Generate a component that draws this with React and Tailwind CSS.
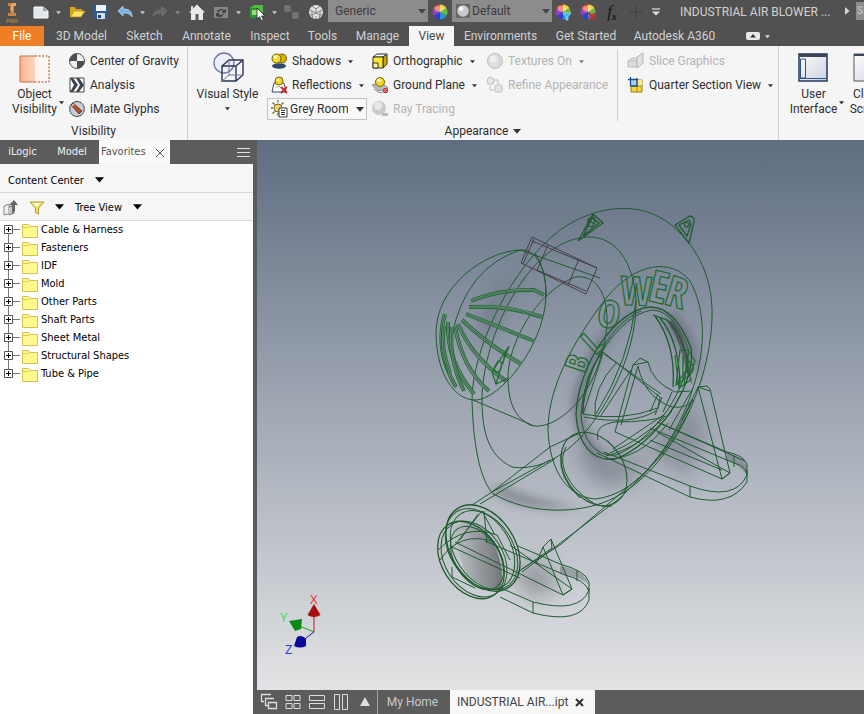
import { useState } from "react";

const RIBBON_TABS = [
  { name: "3D Model", className: "w-[71px]" },
  { name: "Sketch", className: "w-[55px]" },
  { name: "Annotate", className: "w-[69px]" },
  { name: "Inspect", className: "w-[58px]" },
  { name: "Tools", className: "w-[47px]" },
  { name: "Manage", className: "w-[63px]" },
  { name: "View", className: "w-[45px]" },
  { name: "Environments", className: "w-[93px]" },
  { name: "Get Started", className: "w-[78px]" },
  { name: "Autodesk A360", className: "w-[99px]" },
];

const FOLDERS = [
  "Cable & Harness",
  "Fasteners",
  "IDF",
  "Mold",
  "Other Parts",
  "Shaft Parts",
  "Sheet Metal",
  "Structural Shapes",
  "Tube & Pipe",
];

function Caret({ className = "text-[#333]", size = 5 }) {
  return (
    <svg width={size} height={size} viewBox="0 0 6 6" className={`shrink-0 ${className}`} aria-hidden="true">
      <path d="M0 1.5h6L3 5z" fill="currentColor" />
    </svg>
  );
}

function Icon({ size = 18, box = 18, children }) {
  return (
    <svg width={size} height={size} viewBox={`0 0 ${box} ${box}`} className="shrink-0" fill="none" aria-hidden="true">
      {children}
    </svg>
  );
}

/* ---------- quick access bar ---------- */

function QuickButton({ label, className = "", children }) {
  return (
    <button type="button" aria-label={label} className={`flex h-6 w-[22px] shrink-0 items-center justify-center ${className}`}>
      {children}
    </button>
  );
}

function QuickCaret({ label, dim }) {
  return (
    <button type="button" aria-label={label} className="flex h-6 w-[13px] shrink-0 items-center justify-center">
      <Caret className={dim ? "text-[#8a8a8a]" : "text-[#c8c8c8]"} />
    </button>
  );
}

function Wheel({ mark }) {
  return (
    <Icon>
      <path d="M9 9V1.500a7.500 7.500 0 0 1 6.500 3.750z" fill="#f6cf33" />
      <path d="M9 9l6.500-3.750a7.500 7.500 0 0 1 0 7.500z" fill="#63bd45" />
      <path d="M9 9l6.500 3.750A7.500 7.500 0 0 1 9 16.500z" fill="#2a8fd8" />
      <path d="M9 9v7.500a7.500 7.500 0 0 1-6.500-3.750z" fill="#3340c4" />
      <path d="M9 9l-6.500 3.750a7.500 7.500 0 0 1 0-7.500z" fill="#9a3cc0" />
      <path d="M9 9L2.500 5.250A7.500 7.500 0 0 1 9 1.500z" fill="#ec5330" />
      <ellipse cx="8" cy="6" rx="4.500" ry="3" fill="#fff" opacity=".35" />
      {mark === "filter" && <path d="M9 10h8l-3 3.500V17h-2v-3.500z" fill="#39b6e8" stroke="#e8f6fc" strokeWidth=".5" />}
      {mark === "clear" && <path d="M10 10l6 6.500M16 10l-6 6.500" stroke="#d42a2a" strokeWidth="2" />}
    </Icon>
  );
}

function QuickSelect({ label, value, icon }) {
  return (
    <div className="relative mb-1 flex h-[22px] w-[100px] shrink-0 items-center bg-[#8c8c8c] pl-1 text-[#3c3c3c]">
      {icon}
      <select
        aria-label={label}
        defaultValue={value}
        className={`h-full w-full appearance-none bg-transparent text-[12px] outline-none ${icon ? "pl-[2px]" : "pl-[3px]"}`}
      >
        <option>{value}</option>
      </select>
      <span className="pointer-events-none absolute right-[2px]">
        <Caret size={8} className="text-[#444]" />
      </span>
    </div>
  );
}

function QuickAccessBar() {
  return (
    <header className="flex h-[26px] items-start overflow-hidden bg-[#515151]">
      <div className="flex h-[26px] w-6 shrink-0 flex-col items-center">
        <svg width="12" height="15" viewBox="0 0 12 15" className="mt-[2px] shrink-0" aria-hidden="true">
          <path d="M2 1h8v3H7.500v7H10v3H2v-3h2.500V4H2z" fill="#c98443" />
          <path d="M4.500 4L7 1h3v3H7.500v7L4.500 8z" fill="#e8a860" />
        </svg>
        <span className="text-[6px] leading-[7px] font-bold text-[#c07a3a]">PRO</span>
      </div>
      <QuickButton label="New" className="ml-[6px]">
        <Icon>
          <path d="M2 4h9l5 4v7H2z" fill="#e3e7ec" stroke="#fff" />
          <path d="M11 4v4h5z" fill="#9aa1aa" />
        </Icon>
      </QuickButton>
      <QuickCaret label="New options" />
      <QuickButton label="Open" className="ml-px">
        <Icon>
          <path d="M2 4h5l1 2h6v3H6l-3 5H2z" fill="#d9a520" />
          <path d="M6 8h11l-4 6H2.500z" fill="#ffe169" stroke="#b88612" strokeWidth=".7" />
        </Icon>
      </QuickButton>
      <QuickButton label="Save" className="ml-[2px]">
        <Icon>
          <path d="M2 2h14v14H2z" fill="#305a94" />
          <path d="M4 2h10v6H4z" fill="#eef3f8" />
          <path d="M5 10h8v6H5z" fill="#d5dde7" />
          <path d="M6 12h3v3H6z" fill="#223f68" />
        </Icon>
      </QuickButton>
      <QuickButton label="Undo" className="ml-[2px]">
        <Icon>
          <path d="M2 8l5-5v3c5 0 9 1 9 8-2-3-4-4-9-4v3z" fill="#78b2e6" stroke="#c6e1f8" strokeWidth=".7" />
        </Icon>
      </QuickButton>
      <QuickCaret label="Undo list" />
      <QuickButton label="Redo">
        <Icon>
          <path d="M16 8l-5-4v3C6 7 3 8 2 13c2-2 4-3 9-3v3z" stroke="#747474" fill="#666" />
        </Icon>
      </QuickButton>
      <QuickCaret label="Redo list" dim />
      <QuickButton label="Home" className="ml-[2px]">
        <Icon>
          <path d="M9 1.500l8 8h-2V17H3V9.500H1z" fill="#e8eaec" />
          <path d="M7.500 11h3v6h-3z" fill="#565d66" />
          <path d="M3 3h2v4H3z" fill="#dadada" />
        </Icon>
      </QuickButton>
      <QuickButton label="Update" className="ml-[2px]">
        <Icon>
          <path d="M2 4h14v11H2z" fill="#858585" />
          <path d="M5 9a4 3 0 0 1 7-2l2-1v4h-4l1-2a2.500 2.500 0 0 0-4 1zM4 10h4l-1 1.500c2 1 4 0 5-1.500-1 5-5 5-7 3l-1 1z" fill="#444" />
        </Icon>
      </QuickButton>
      <QuickCaret label="Update options" />
      <QuickButton label="Select" className="ml-px">
        <Icon>
          <path d="M2 5l4-3h9v9l-4 4H2z" fill="#57b947" />
          <path d="M2 5h9v10H2z" fill="#2e9635" />
          <path d="M4 7h5v5H4z" fill="#9edb7f" />
          <path d="M9 5v11l2.500-2.300 2 4 2-1-2-3.700H17z" fill="#fff" stroke="#222" strokeWidth=".8" />
        </Icon>
      </QuickButton>
      <QuickCaret label="Select options" />
      <QuickButton label="Design doctor">
        <Icon>
          <path d="M2 3h5v5H2zM10 10h5v5h-5z" fill="#6f6f6f" stroke="#828282" />
          <path d="M8 7l2 2" stroke="#777" />
        </Icon>
      </QuickButton>
      <QuickButton label="Material" className="ml-[2px]">
        <Icon>
          <circle cx="9" cy="9" r="7" fill="#e2e2e2" />
          <path
            d="M5 3l4 3 4-3M9 6v4M5 8l4 2 4-2M3 7l2 1v4l-3 0M15 7l-2 1v4l3 0M5 12l4-2 4 2M9 16v-3M5 12l1 3M13 12l-1 3"
            stroke="#858585"
          />
        </Icon>
      </QuickButton>
      <div className="ml-px" />
      <QuickSelect label="Material" value="Generic" />
      <QuickButton label="Appearance" className="ml-px">
        <Wheel />
      </QuickButton>
      <div className="ml-px" />
      <QuickSelect
        label="Appearance"
        value="Default"
        icon={
          <Icon size={14}>
            <path d="M0 0h18v18H0z" fill="#666" />
            <circle cx="9" cy="9" r="7.500" fill="#c9c9c9" />
            <circle cx="6.500" cy="6" r="3" fill="#f4f4f4" />
          </Icon>
        }
      />
      <QuickButton label="Adjust appearance">
        <Wheel mark="filter" />
      </QuickButton>
      <QuickButton label="Clear appearance" className="ml-[3px]">
        <Wheel mark="clear" />
      </QuickButton>
      <QuickButton label="Parameters" className="ml-[2px]">
        <span className="font-['Liberation_Serif',serif] text-[17px] leading-5 text-[#151515] italic">
          f<sub className="text-[10px] font-bold">x</sub>
        </span>
      </QuickButton>
      <QuickButton label="Add" className="ml-[2px]">
        <Icon>
          <path d="M9 3v12M3 9h12" stroke="#444" strokeWidth="1.500" />
        </Icon>
      </QuickButton>
      <QuickButton label="Customize" className="-ml-[2px]">
        <Icon size={10} box={10}>
          <path d="M1 2h8" stroke="#ddd" strokeWidth="1.200" />
          <path d="M1 4.500h8L5 8.500z" fill="#ddd" />
        </Icon>
      </QuickButton>
      <h1 className="ml-[13px] shrink-0 text-[12px] leading-6 whitespace-nowrap text-[#d2d2d2]">INDUSTRIAL AIR BLOWER ...</h1>
      <div className="ml-auto flex h-[22px] shrink-0 items-center gap-[6px]">
        <svg width="5" height="8" viewBox="0 0 5 8" aria-hidden="true">
          <path d="M0 0l4.500 4L0 8z" fill="#d8d8d8" />
        </svg>
        <div className="h-[18px] w-2 bg-[#8c8c8c] pl-px text-[10px] leading-[18px] text-[#ccc]">S</div>
      </div>
    </header>
  );
}

function RibbonTabs({ active, onSelect }) {
  return (
    <nav className="flex h-5 overflow-hidden bg-[#515151] text-[12px] leading-5 text-[#d0d0d0]">
      <button type="button" className="mr-[2px] h-5 w-11 shrink-0 bg-[#ee7f25] text-white">
        File
      </button>
      {RIBBON_TABS.map((tab) => (
        <button
          key={tab.name}
          type="button"
          onClick={() => onSelect(tab.name)}
          className={`h-5 shrink-0 text-center whitespace-nowrap ${tab.className} ${active === tab.name ? "bg-[#f5f5f5] text-[#454545]" : ""}`}
        >
          {tab.name}
        </button>
      ))}
      <button type="button" aria-label="Minimize ribbon" className="ml-[22px] flex shrink-0 items-center gap-[5px]">
        <svg width="14" height="8" viewBox="0 0 14 8" aria-hidden="true">
          <rect width="14" height="8" rx="2" fill="#e8e8e8" />
          <path d="M4 5.500h6L7 2z" fill="#333" />
        </svg>
        <Caret className="text-[#ddd]" />
      </button>
    </nav>
  );
}

/* ---------- ribbon ---------- */

function RibbonButton({ icon, label, caret, disabled }) {
  return (
    <button
      type="button"
      disabled={disabled}
      className={`flex h-6 items-center gap-1 whitespace-nowrap ${disabled ? "text-[#b4b4b4]" : "text-[#2e2e2e]"}`}
    >
      {icon}
      <span>{label}</span>
      {caret && <Caret className={disabled ? "ml-[3px] text-[#777]" : "ml-[3px] text-[#333]"} />}
    </button>
  );
}

const shadowsIcon = (
  <Icon>
    <ellipse cx="9" cy="14" rx="7" ry="2.800" fill="#33486e" />
    <circle cx="12" cy="6.500" r="4.500" fill="#d9b400" stroke="#6b5900" />
    <circle cx="6.500" cy="6.500" r="4.500" fill="#f7dc20" stroke="#6b5900" />
    <circle cx="5.500" cy="5" r="1.800" fill="#fffbd0" />
  </Icon>
);

const reflectionsIcon = (
  <Icon>
    <path d="M4 7h10l2 9H2z" fill="#fff" stroke="#39475f" />
    <circle cx="9" cy="5" r="4" fill="#f2d524" stroke="#7a6600" />
    <circle cx="8" cy="3.800" r="1.500" fill="#fffbd0" />
    <path d="M6 12c1-2 4-2 5 0" stroke="#a89434" />
    <path d="M11 11l6 6M17 11l-6 6" stroke="#c6252a" strokeWidth="1.800" />
  </Icon>
);

const sunIcon = (
  <Icon>
    <circle cx="8" cy="8" r="4" fill="#f2d76a" stroke="#6c6130" />
    <path d="M8 0v2.500M1 8h2M2.500 2.500l2 2M13.500 2.500l-2 2M2.500 13.500l2-2M8 13v2.500" stroke="#7a6a20" strokeWidth="1.300" />
    <path d="M9 8h8v9H9z" fill="#fff" stroke="#3b3b3b" />
    <path d="M11 10.500h4M11 12.500h4M11 14.500h4" stroke="#3b3b3b" />
  </Icon>
);

const orthoIcon = (
  <Icon>
    <path d="M2 5l4-3h10l-4 3z" fill="#fff" stroke="#333" />
    <path d="M12 5l4-3v10l-4 4z" fill="#caa90a" stroke="#333" />
    <path d="M2 5h10v11H2z" fill="#ffe52e" stroke="#333" />
    <path d="M2 11h5v5H2z" fill="#fff6a0" stroke="#333" />
  </Icon>
);

const groundIcon = (
  <Icon>
    <path d="M1 9l7 6 9-3-6-5z" fill="#b9bec6" stroke="#888" />
    <path d="M3 13l6 4 5-2" stroke="#8a8f98" />
    <circle cx="9" cy="6" r="4.500" fill="#f2d524" stroke="#7a6600" />
    <circle cx="8" cy="4.500" r="1.800" fill="#fffbd0" />
    <path d="M12 12h5v5h-5z" fill="#c6353a" />
    <path d="M12 12l5 5M17 12l-5 5" stroke="#f2b0b0" strokeWidth=".7" />
  </Icon>
);

const rayIcon = (
  <Icon>
    <circle cx="8" cy="8" r="7" fill="#c9c9c9" />
    <circle cx="7" cy="6" r="4" fill="#e7e7e7" />
    <path d="M11 13h6v3h-6z" fill="#bcbcbc" />
  </Icon>
);

const texturesIcon = (
  <Icon>
    <circle cx="9" cy="9" r="7.500" fill="#e0e0e0" stroke="#bdbdbd" />
    <path d="M12 3q4 6 0 12" stroke="#cacaca" />
    <circle cx="7" cy="7" r="3.500" fill="#efefef" />
  </Icon>
);

const refineIcon = (
  <Icon>
    <circle cx="4.500" cy="5" r="3.500" stroke="#bdbdbd" fill="#e6e6e6" />
    <path d="M9 4h3v4M4 10v4h4" stroke="#bdbdbd" />
    <rect x="9" y="9" width="7" height="7" rx="1.500" stroke="#bdbdbd" fill="#e6e6e6" />
  </Icon>
);

const sliceIcon = (
  <Icon>
    <path d="M1 9h9v6H1zM1 9l4-3h6l-1 3" fill="#dcdcdc" stroke="#bcbcbc" />
    <path d="M10 5l6-4v10l-6 5z" fill="#e2e2e2" stroke="#b4b4b4" />
  </Icon>
);

const quarterIcon = (
  <Icon>
    <path d="M4 4h11v12H4z" fill="#f5d93a" stroke="#9b7d10" />
    <path d="M4 4h6v6H4z" fill="#a9d1f5" />
    <path d="M10 4h5v6h-5z" fill="#fbeb8a" />
    <path d="M4 10h11M10 4v12" stroke="#a5861a" />
    <path d="M1 3.500h10M3.500 1v9M3.500 10h7M10 2v8" stroke="#1d4f91" strokeWidth="1.300" />
  </Icon>
);

const gravityIcon = (
  <Icon>
    <circle cx="9" cy="9" r="7.500" fill="#eee" stroke="#555" />
    <path d="M9 9V1.500A7.500 7.500 0 0 0 1.500 9zM9 9v7.500A7.500 7.500 0 0 0 16.500 9z" fill="#4b4e54" />
  </Icon>
);

const analysisIcon = (
  <Icon>
    <path d="M2 2h14v14H2z" fill="#fff" stroke="#444" />
    <path d="M2 2h3l5 7-5 7H2l4-7zM8 2h3l5 7-5 7H8l4-7z" fill="#3f454d" />
  </Icon>
);

const imateIcon = (
  <Icon>
    <circle cx="9" cy="9" r="7.500" fill="#c9cfd8" stroke="#4a4a4a" />
    <path d="M3 13a8 8 0 0 1 0-8M15 13a8 8 0 0 0 0-8" stroke="#8b94a3" strokeWidth="1.500" />
    <path d="M5 3l9 8-3 3-8-9z" fill="#b5512f" stroke="#5b2414" strokeWidth=".8" />
    <path d="M4 6l2-2" stroke="#f1c4a9" strokeWidth="1.500" />
  </Icon>
);

function Ribbon() {
  return (
    <section className="flex h-[94px] overflow-hidden bg-[#f5f5f5] text-[12px] text-[#2e2e2e]">
      <div className="flex w-[187px] shrink-0 flex-col pt-[3px]">
        <div className="flex">
          <button type="button" className="flex w-[68px] flex-col items-center pt-[6px]">
            <svg width="31" height="28" viewBox="0 0 31 28" aria-hidden="true">
              <defs>
                <linearGradient id="visFill" x1="0" x2="1">
                  <stop offset="0" stopColor="#fbb58d" />
                  <stop offset="1" stopColor="#fdd5bd" />
                </linearGradient>
              </defs>
              <path d="M1 1h15v26H1z" fill="url(#visFill)" />
              <path d="M16 1h14v26H16z" fill="#fdf6f3" />
              <path d="M16 1H1v26h15" fill="none" stroke="#c4704c" />
              <path d="M16 1h14v26H16" fill="none" stroke="#a8452f" strokeDasharray="2 1.500" />
            </svg>
            <span className="mt-1 ml-2 flex items-center leading-[15px]">
              <span className="text-center">
                Object
                <br />
                Visibility
              </span>
              <Caret className="ml-[2px]" />
            </span>
          </button>
          <div className="flex flex-col items-start">
            <RibbonButton icon={gravityIcon} label="Center of Gravity" />
            <RibbonButton icon={analysisIcon} label="Analysis" />
            <RibbonButton icon={imateIcon} label="iMate Glyphs" />
          </div>
        </div>
        <h2 className="text-center leading-5">Visibility</h2>
      </div>

      <div className="flex w-[592px] shrink-0 flex-col border-x border-[#cdcdcd] pt-[3px]">
        <div className="flex h-[72px]">
          <button type="button" className="flex w-[79px] flex-col items-center pt-[3px]">
            <svg width="32" height="32" viewBox="0 0 32 32" fill="none" aria-hidden="true">
              <circle cx="12" cy="11" r="10" stroke="#6b74ae" strokeWidth="1.300" fill="#eceefa" />
              <path d="M10 14h14v15H10zM10 14l7-6h14v15l-7 6M24 14l7-6" stroke="#2b3654" strokeWidth="1.400" />
              <path d="M17 8v15h14M17 23l-7 6" stroke="#6d7898" />
            </svg>
            <span className="mt-[3px] leading-[15px] whitespace-nowrap">Visual Style</span>
            <Caret className="mt-1" />
          </button>
          <div className="flex w-[104px] flex-col items-start">
            <div className="flex flex-col items-start pl-[3px]">
              <RibbonButton icon={shadowsIcon} label="Shadows" caret />
              <RibbonButton icon={reflectionsIcon} label="Reflections" caret />
            </div>
            <div className="relative mt-px flex h-[22px] w-[100px] items-center border border-[#c2c2c2] bg-[#f8f8f8] pl-[2px]">
              {sunIcon}
              <select
                aria-label="Lighting style"
                defaultValue="Grey Room"
                className="h-full w-[60px] appearance-none overflow-hidden bg-transparent pl-[2px] text-[12px] outline-none"
              >
                <option>Grey Room</option>
              </select>
              <span className="pointer-events-none absolute right-[2px]">
                <Caret size={8} />
              </span>
            </div>
          </div>
          <div className="flex w-[115px] flex-col items-start">
            <RibbonButton icon={orthoIcon} label="Orthographic" caret />
            <RibbonButton icon={groundIcon} label="Ground Plane" caret />
            <RibbonButton icon={rayIcon} label="Ray Tracing" disabled />
          </div>
          <div className="flex w-[132px] flex-col items-start border-r border-[#cdcdcd]">
            <RibbonButton icon={texturesIcon} label="Textures On" caret disabled />
            <RibbonButton icon={refineIcon} label="Refine Appearance" disabled />
          </div>
          <div className="flex flex-col items-start pl-[9px]">
            <RibbonButton icon={sliceIcon} label="Slice Graphics" disabled />
            <RibbonButton icon={quarterIcon} label="Quarter Section View" caret />
          </div>
        </div>
        <h2 className="flex items-center justify-center gap-[5px] leading-5">
          Appearance <Caret size={8} />
        </h2>
      </div>

      <div className="flex shrink-0 pt-[3px] pl-[6px]">
        <button type="button" className="flex w-[56px] flex-col items-center pt-[4px]">
          <svg width="30" height="29" viewBox="0 0 30 29" aria-hidden="true">
            <defs>
              <linearGradient id="winFill" x1="0" y1="0" x2="1" y2="1">
                <stop offset="0" stopColor="#ffffff" />
                <stop offset="1" stopColor="#ccd1e0" />
              </linearGradient>
            </defs>
            <path d="M1 1h28v27H1z" fill="url(#winFill)" stroke="#24375c" strokeWidth="1.500" />
            <path d="M1 1h28v3H1z" fill="#3c4557" />
            <path d="M2.500 6h5v19h-5zM2 25.500h26" fill="none" stroke="#2c5590" />
          </svg>
          <span className="mt-[5px] ml-2 flex items-center leading-[15px]">
            <span className="text-center">
              User
              <br />
              Interface
            </span>
            <Caret className="ml-[2px]" />
          </span>
        </button>
        <button type="button" className="ml-[7px] flex w-[40px] flex-col items-center pt-[4px]">
          <svg width="30" height="29" viewBox="0 0 30 29" aria-hidden="true">
            <path d="M1 1h28v27H1z" fill="url(#winFill)" stroke="#555" />
            <path d="M1 1h28v2H1z" fill="#3c4557" />
          </svg>
          <span className="mt-[5px] text-center leading-[15px]">
            Clean
            <br />
            Screen
          </span>
        </button>
      </div>
    </section>
  );
}

/* ---------- content browser ---------- */

function BrowserPanel() {
  return (
    <aside className="flex w-[257px] shrink-0 flex-col border-r-4 border-[#595b5e] bg-white font-['DejaVu_Sans_Condensed','Noto_Sans',sans-serif] text-[11px] text-black">
      <div className="flex h-6 items-stretch bg-[#5c5c5c] text-[#f0f0f0]">
        <button type="button" className="w-[45px]">iLogic</button>
        <button type="button" className="w-[54px]">Model</button>
        <div className="flex w-[71px] items-center justify-between bg-[#fafafa] pr-[5px] pl-[2px] text-[#555]">
          <button type="button">Favorites</button>
          <button type="button" aria-label="Close Favorites" className="pt-[2px]">
            <Icon size={10} box={10}>
              <path d="M1 1l8 8M9 1l-8 8" stroke="#555" />
            </Icon>
          </button>
        </div>
        <button type="button" aria-label="Panel menu" className="mr-[3px] ml-auto">
          <Icon size={13} box={13}>
            <path d="M0 2.500h13M0 6.500h13M0 10.500h13" stroke="#e0e0e0" />
          </Icon>
        </button>
      </div>
      <button type="button" className="flex h-[29px] items-center gap-[11px] border-b border-[#d8d8d8] bg-[#f6f6f6] pt-[6px] pl-2">
        Content Center <Caret size={9} className="mb-1 text-black" />
      </button>
      <div className="flex h-[28px] items-center border-b border-[#d8d8d8] bg-[#f6f6f6] pt-[2px] pl-[2px]">
        <button type="button" aria-label="Up one level">
          <Icon>
            <path d="M2 7l5-2v10l-5 1z" fill="#eee" stroke="#888" />
            <path d="M7 8l5-2v8l-5 2" fill="#c9c9c9" stroke="#666" />
            <path d="M10 14V6H7l5-5 4 5h-3v6z" fill="#666" />
          </Icon>
        </button>
        <button type="button" aria-label="Filter" className="ml-2 flex items-center gap-[9px]">
          <Icon>
            <path d="M2 3h14l-5.500 6v6l-3-1.500V9z" fill="#f7e45a" stroke="#b59c2c" />
            <path d="M5 4h7l-3 4z" fill="#fff" />
          </Icon>
          <Caret size={9} className="mb-[3px] text-black" />
        </button>
        <button type="button" className="ml-[11px] flex items-center gap-[11px] pt-[2px]">
          Tree View <Caret size={9} className="mb-[5px] text-black" />
        </button>
      </div>
      <ul className="flex flex-col pl-[3px]">
        {FOLDERS.map((name, idx) => (
          <li key={name} className="flex h-[18px] items-center">
            <button type="button" aria-label={`Expand ${name}`}>
              <svg width="19" height="18" viewBox="0 0 19 18" className="block" aria-hidden="true">
                <path
                  d={idx === 0 ? "M5.500 9v9" : idx === FOLDERS.length - 1 ? "M5.500 0v9" : "M5.500 0v18"}
                  stroke="#777"
                />
                <path d="M9 8.500h8" stroke="#777" />
                <path d="M1.500 4.500h8v8h-8z" fill="#fff" stroke="#555" />
                <path d="M3 8.500h5M5.500 6v5" stroke="#000" />
              </svg>
            </button>
            <svg width="16" height="15" viewBox="0 0 16 15" className="shrink-0" aria-hidden="true">
              <path d="M.5 1.500h6l1 2h8v11H.5z" fill="#fff88f" stroke="#d8c050" />
              <path d="M1 4.500h6l1-1" fill="none" stroke="#e3cd5e" />
            </svg>
            <span className="ml-[3px] whitespace-nowrap">{name}</span>
          </li>
        ))}
      </ul>
    </aside>
  );
}

/* ---------- model view ---------- */

// cooling slots cut in the motor cap
const SLOTS = [
  "M471 301Q500 289 534 290L544 295",
  "M469 307Q508 305 542 317",
  "M466 314L534 341",
  "M462 320Q486 343 521 364",
  "M458 324Q472 357 506 381",
  "M455 326Q462 368 489 391",
  "M448 322Q446 360 474 394",
  "M445 314Q434 350 456 387",
  "M444 326Q440 348 450 373",
  "M452 327Q448 358 464 391",
];

const LETTERS = [
  { ch: "B", x: 577, y: 363, turn: -72, size: 31 },
  { ch: "L", x: 592, y: 342, turn: -42, size: 34 },
  { ch: "O", x: 609, y: 314, turn: 10, size: 38 },
  { ch: "W", x: 636, y: 291, turn: 2, size: 40 },
  { ch: "E", x: 659, y: 287, turn: 13, size: 44 },
  { ch: "R", x: 677, y: 292, turn: 17, size: 42 },
];

function BlowerModel() {
  return (
    <svg viewBox="257 140 607 550" className="block h-full w-full" fill="none" role="img" aria-label="Industrial air blower model">
      <defs>
        <filter id="soft" x="-50%" y="-50%" width="200%" height="200%">
          <feGaussianBlur stdDeviation="10" />
        </filter>
        <filter id="softSmall" x="-50%" y="-50%" width="200%" height="200%">
          <feGaussianBlur stdDeviation="5" />
        </filter>
        <linearGradient id="mouth" x1="0" y1="0" x2="1" y2="0">
          <stop offset="0" stopColor="#b4b7ba" stopOpacity=".4" />
          <stop offset=".55" stopColor="#74777b" stopOpacity=".6" />
          <stop offset="1" stopColor="#55585c" stopOpacity=".75" />
        </linearGradient>
      </defs>

      {/* shading */}
      <path d="M535 262Q510 280 492 330L482 350Q478 320 500 290Z" fill="#4f5566" opacity=".6" filter="url(#soft)" />
      <path d="M640 306Q590 330 572 400Q574 450 605 462Q582 430 584 400Q596 340 640 306Z" fill="#34373f" opacity=".4" filter="url(#softSmall)" />
      <path d="M575 455Q585 435 625 462L645 455Q640 490 600 485Z" fill="#41454d" opacity=".35" filter="url(#soft)" />
      <path d="M490 490Q515 512 580 508Q540 500 500 486Z" fill="#41454d" opacity=".4" filter="url(#softSmall)" />
      <path d="M670 310Q705 335 698 380Q684 350 664 325Z" fill="#33363e" opacity=".3" filter="url(#softSmall)" />
      <path d="M672 320Q688 338 692 385L686 372Q682 345 668 322Z" fill="#33363e" opacity=".5" />
      <path d="M645 450L695 400L705 440L690 478Z" fill="#4d5158" opacity=".32" filter="url(#soft)" />
      <path d="M512 570L545 560L560 588L530 600Z" fill="#4d5158" opacity=".4" filter="url(#soft)" />
      <path d="M727 453Q743 456 747 466V475Q740 465 727 460Z" fill="#4d5158" opacity=".35" />
      <path d="M560 566Q585 570 589 585Q580 576 560 574Z" fill="#4d5158" opacity=".35" />
      <path d="M453 528Q470 515 490 537Q507 566 500 589Q480 590 464 570Z" fill="url(#mouth)" />

      <g stroke="#205a30" strokeWidth="1">
        {/* housing */}
        <path d="M472 400C472 350 510 268 560 230C600 202 648 200 678 231C703 255 713 285 712 318C710 390 665 485 596 505C560 515 520 510 492 493C476 472 473 430 472 400Z" />
        <path d="M482 405C480 350 515 270 560 245C600 224 632 245 636 300C637 345 615 395 587 430C560 463 532 470 512 467C487 455 483 430 482 405Z" />
        <path d="M508 380C507 345 535 293 575 277C600 274 608 300 607 325C604 360 590 390 573 407C555 425 540 428 530 425C512 415 509 400 508 380Z" />
        <path d="M520 250L600 278M473 400L532 425M636 300Q630 360 596 414" />
        {/* front ring */}
        <path d="M690 397C707 350 706 310 690 281C672 258 636 262 607 297C570 345 548 390 548 430C550 475 570 497 595 499C640 495 675 440 690 397Z" />
        <path d="M693 400Q668 455 620 498L522 572M690 410Q665 460 627 488L560 545L522 569" />
        {/* inlet rim */}
        <path d="M650 307C615 310 578 365 576 415C578 445 593 462 615 459C655 445 697 385 691 348C680 320 667 307 650 307Z" strokeWidth="1.300" />
        <path d="M652 310C618 315 583 370 581 415C583 442 597 457 616 455C653 441 692 385 688 348C678 323 668 311 652 310Z" />
        <path d="M641 311C610 325 590 360 582 413" />
        {/* impeller */}
        <path d="M603 352L660 397L658 408Q620 422 583 414Q582 375 603 352ZM604 354L661 394M584 417Q630 426 656 411" />
        <path d="M617 362Q592 388 595 417M631 370L600 417M603 352Q598 370 583 414" />
        <path d="M653 315L667 320Q687 340 688 372M655 316Q676 345 673 387M660 318Q680 342 680 388" strokeWidth="1.300" />
        <path d="M615 432L633 365L640 358L648 362Q652 382 675 392L690 391M621 425L638 366M633 365L648 362M638 366Q645 398 672 407Q688 409 693 399M672 392L663 412M669 430L693 388" />
        <path d="M598 440Q594 425 615 422Q650 422 666 416M610 453Q640 440 664 418M606 456Q645 446 672 411M613 449L665 414M605 459Q640 460 668 423M658 394L650 412M662 397L655 415" />
        {/* outlet pipe */}
        <path d="M472 505L492 492L550 447L580 433M480 504L555 459M492 492L550 460" />
        <ellipse cx="594" cy="469" rx="29" ry="40" transform="rotate(-35 594 469)" />
        <path d="M566 447Q556 465 575 488Q595 510 612 506M561 455Q558 478 580 498" />
        {/* feet */}
        <path d="M604 452L690 486Q735 502 747 475L747 464Q743 455 727 452L657 422M597 453L690 497Q730 508 747 482V470M690 486V497M734 455V467M657 432L730 473L722 479L615 432M650 440L722 470M662 424L745 461M747 475Q746 466 734 463L650 428" />
        <path d="M698 387L722 479L730 473L710 389L707 386ZM698 387L710 391M698 387L682 420" />
        <path d="M503 589L533 602Q580 614 589 590V582Q586 571 560 564L518 546M500 597L533 613Q580 625 589 600V588M533 602V613M577 570V581M510 545L572 589L563 595L455 542M589 591Q585 580 565 575L485 541M452 547L520 578" />
        <path d="M543 547L563 595L572 589L551 539ZM551 539L552 548L518 572M543 547L536 564" />
        {/* outlet flange */}
        <ellipse cx="483" cy="548" rx="32" ry="47" transform="rotate(-33 483 548)" strokeWidth="1.300" />
        <ellipse cx="484" cy="550" rx="29" ry="43" transform="rotate(-33 484 550)" />
        <ellipse cx="480" cy="549" rx="30" ry="44" transform="rotate(-33 480 549)" />
        <ellipse cx="471" cy="560" rx="29" ry="42" transform="rotate(-33 471 560)" strokeWidth="1.300" />
        <ellipse cx="474" cy="559" rx="29" ry="41" transform="rotate(-33 474 559)" />
        <ellipse cx="477" cy="558" rx="22" ry="35" transform="rotate(-33 477 558)" />
        <path d="M438 550Q465 523 497 535M440 560Q460 530 495 542M455 545L482 511L495 535M460 540L478 514M452 567V577L475 588M484 511L487 543M497 535L510 560" />
        {/* motor cap */}
        <path d="M520 250C487 251 435 285 436 335C437 375 455 400 475 400C500 400 545 345 546 295C546 265 535 249 520 250Z" />
        <path d="M520 250Q466 268 452 335M535 253Q547 272 546 297" />
        {/* lifting lugs */}
        <path d="M593 214L603 223L578 241ZM592 218L599 223L583 236ZM590 221L594 224M588 220Q594 214 595 220Q594 229 588 226Z" strokeWidth="1.300" />
        <path d="M675 225L690 216Q695 217 694 222L689 243ZM679 225L689 220L691 224L687 236ZM684 223Q689 221 689 225Q685 230 684 223Z" strokeWidth="1.300" />
      </g>

      {SLOTS.map((d) => (
        <g key={d}>
          <path d={d} stroke="#1d6b2b" strokeWidth="4" />
          <path d={d} stroke="#7e8c93" strokeWidth="2.200" />
          <path d={d} stroke="#1d6b2b" strokeWidth=".8" />
        </g>
      ))}

      <g stroke="#1d6b2b" strokeWidth="1.200">
        <path d="M509 346L505 352L492 372L496 384L501 367ZM498 361Q503 360 501 369Q496 376 494 368ZM505 352L503 364M496 384L508 378" />
        <path d="M680 350L676 385L690 375L695 361L688 350ZM683 356V380M688 353L684 386M675 355L679 388L692 379M677 383L688 368M689 361Q697 366 690 375Q684 372 689 361Z" />
        {LETTERS.map((l) => (
          <text
            key={l.ch}
            x={l.x}
            y={l.y}
            dy=".36em"
            textAnchor="middle"
            fontSize={l.size}
            transform={`rotate(${l.turn} ${l.x} ${l.y})`}
            className="font-['Liberation_Sans_Narrow','Open_Sans_Condensed','Liberation_Sans',sans-serif] font-bold"
          >
            {l.ch}
          </text>
        ))}
      </g>

      {/* name plate */}
      <path d="M532 237L597 268L586 294L521 263ZM534 239L523 264M579 259L568 285M597 268L532 241M548 245L537 270L586 291" stroke="#453d48" />
    </svg>
  );
}

function AxisTriad() {
  return (
    <svg width="50" height="74" viewBox="0 -6 50 74" className="absolute bottom-[30px] left-[21px]" fill="none" aria-hidden="true">
      <path d="M36 40V19" stroke="#c01818" />
      <path d="M36 40L19 33" stroke="#1a9a2a" />
      <path d="M36 40L24 49" stroke="#1a1a9a" />
      <path d="M36 12l6.500 11q-6.500 4-13 0z" fill="#a80c0c" />
      <path d="M11 29l13-2-1 10-6 2z" fill="#0c8a14" />
      <path d="M16 54l3-9q5-3 9 2v7q-6 3-12 0z" fill="#0a0a9c" />
      <g className="font-['Noto_Sans',sans-serif]" fontSize="13">
        <text x="32" y="12" fill="#f03434">X</text>
        <text x="2" y="30" fill="#3fe04a">Y</text>
        <text x="7" y="62" fill="#3434e0">Z</text>
      </g>
    </svg>
  );
}

function DocumentTabs() {
  return (
    <footer className="flex h-6 shrink-0 items-stretch bg-[#5c5c5c] text-[12px]">
      <div className="flex w-[120px] shrink-0 items-center gap-[6px] pl-[3px] text-[#ddd]">
        <button type="button" aria-label="Cascade">
          <Icon>
            <path d="M11 1.500H1.500v7H4M14 5.500H5.500v7H8M8.500 9.500h8v6h-8z" stroke="currentColor" strokeWidth="1.300" />
          </Icon>
        </button>
        <button type="button" aria-label="Tile">
          <Icon>
            <path d="M2 2.500h6v5H2zM10 2.500h6v5h-6zM2 10.500h6v5H2zM10 10.500h6v5h-6z" stroke="currentColor" />
          </Icon>
        </button>
        <button type="button" aria-label="Tile horizontally">
          <Icon>
            <path d="M1.500 2.500h15v5h-15zM1.500 10.500h15v5h-15z" stroke="currentColor" />
          </Icon>
        </button>
        <button type="button" aria-label="Tile vertically">
          <Icon>
            <path d="M2.500 1.500h5v15h-5zM10.500 1.500h5v15h-5z" stroke="currentColor" />
          </Icon>
        </button>
        <button type="button" aria-label="Show open documents">
          <Icon>
            <path d="M4 13h10L9 4z" fill="currentColor" />
          </Icon>
        </button>
      </div>
      <button type="button" className="w-[73px] shrink-0 border-l border-[#a0a0a0] pr-[3px] text-[#c8c8c8]">
        My Home
      </button>
      <div className="flex w-[145px] shrink-0 items-center justify-between bg-[#f7f7f7] pr-[11px] pl-[7px] text-[#444]">
        <button type="button" className="whitespace-nowrap">INDUSTRIAL AIR...ipt</button>
        <button type="button" aria-label="Close document">
          <Icon size={9} box={9}>
            <path d="M1 1l7 7M8 1L1 8" stroke="#333" strokeWidth="2" />
          </Icon>
        </button>
      </div>
    </footer>
  );
}

export default function App() {
  const [tab, setTab] = useState("View");

  return (
    <div className="flex h-screen flex-col overflow-hidden font-['Roboto','Noto_Sans',sans-serif]">
      <QuickAccessBar />
      <RibbonTabs active={tab} onSelect={setTab} />
      <Ribbon />
      <div className="flex min-h-0 flex-1">
        <BrowserPanel />
        <main className="flex min-w-0 flex-1 flex-col">
          <div className="relative min-h-0 flex-1 bg-linear-to-b from-[#5f6d81] via-[#a2a9b5] to-[#e2e3e4]">
            <BlowerModel />
            <AxisTriad />
          </div>
          <DocumentTabs />
        </main>
      </div>
    </div>
  );
}
